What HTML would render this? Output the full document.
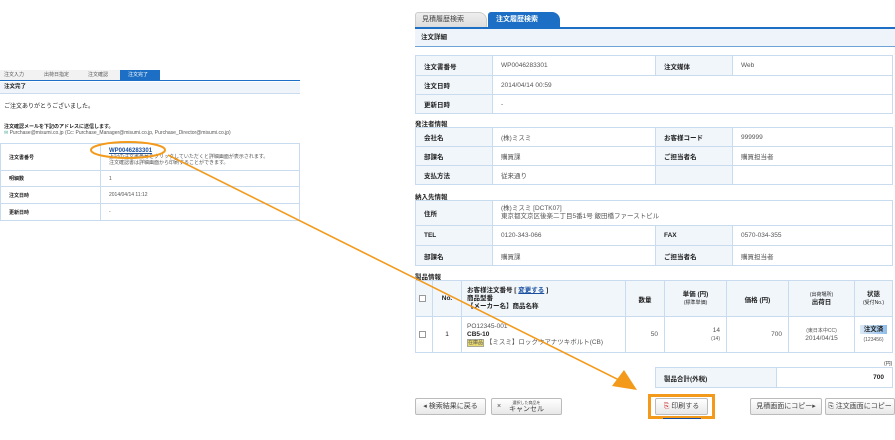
<!DOCTYPE html>
<html><head><meta charset="utf-8"><style>
*{margin:0;padding:0;box-sizing:border-box}
body{width:895px;height:440px;background:#fff;position:relative;overflow:hidden;font-family:"Liberation Sans","Noto Sans CJK JP",sans-serif;color:#333;font-size:7px}
.a{position:absolute;white-space:nowrap}
.b{font-weight:bold;color:#222}
table{position:absolute;border-collapse:collapse}
td{border:1px solid #c9dcef;padding:0 8px;font-size:6.5px;color:#555;white-space:nowrap}
td.l{background:#f1f6fb;font-weight:bold;color:#222;}
.btn{position:absolute;height:17px;border:1px solid #bbb;border-radius:2px;background:linear-gradient(#fff,#e8e8e8);font-size:7px;color:#444;text-align:center;line-height:15px}
</style></head><body>

<!-- LEFT PANEL -->
<div class="a" style="left:0;top:70px;width:160px;height:10px;background:#f2f2f2;font-size:5px;line-height:10px;color:#555">
<span style="position:absolute;left:4px">注文入力</span><span style="position:absolute;left:44px">出荷日指定</span><span style="position:absolute;left:88px">注文確認</span>
</div>
<div class="a" style="left:120px;top:70px;width:40px;height:10px;background:#1c6fc4;color:#fff;font-size:5px;line-height:10px;padding-left:8px">注文完了</div>
<div class="a" style="left:0;top:80px;width:300px;height:1px;background:#1c6fc4"></div>
<div class="a b" style="left:0;top:82px;width:300px;height:12px;background:#eef4fa;border-bottom:1px solid #c9dcef;font-size:5.5px;line-height:11px;padding-left:4px">注文完了</div>
<div class="a" style="left:4px;top:101px;font-size:6px;color:#222">ご注文ありがとうございました。</div>
<div class="a b" style="left:4px;top:123px;font-size:5px">注文確認メールを下記のアドレスに送信します。</div>
<div class="a" style="left:4px;top:130px;font-size:5px;color:#555"><span style="color:#4a9">✉</span> Purchase@misumi.co.jp (Cc: Purchase_Manager@misumi.co.jp, Purchase_Director@misumi.co.jp)</div>
<table style="left:0;top:143px;width:300px">
<tr style="height:27px"><td class="l" style="width:100px;font-size:5px;background:#fff">注文書番号</td><td style="font-size:5px;line-height:6px"><span style="color:#1a4fa0;text-decoration:underline;font-weight:bold;font-size:6px">WP0046283301</span><br>上記の注文書番号をクリックしていただくと詳細画面が表示されます。<br>注文確認書は詳細画面から印刷することができます。</td></tr>
<tr style="height:16px"><td class="l" style="font-size:5px;background:#fff">明細数</td><td style="font-size:5px">1</td></tr>
<tr style="height:17px"><td class="l" style="font-size:5px;background:#fff">注文日時</td><td style="font-size:5px">2014/04/14 11:12</td></tr>
<tr style="height:17px"><td class="l" style="font-size:5px;background:#fff">更新日時</td><td style="font-size:5px">-</td></tr>
</table>

<!-- RIGHT PANEL -->
<div class="a" style="left:415px;top:12px;width:72px;height:15px;background:linear-gradient(#eee,#ddd);border:1px solid #ccc;border-bottom:none;border-radius:3px 8px 0 0;font-size:7px;line-height:14px;padding-left:6px;color:#444">見積履歴検索</div>
<div class="a b" style="left:488px;top:12px;width:72px;height:15px;background:#1c6fc4;border-radius:3px 8px 0 0;font-size:7px;line-height:15px;padding-left:8px;color:#fff">注文履歴検索</div>
<div class="a" style="left:415px;top:27px;width:480px;height:2px;background:#1c6fc4"></div>
<div class="a b" style="left:415px;top:29px;width:480px;height:18px;background:#eef4fa;border-bottom:1px solid #6fa3d8;font-size:6.5px;line-height:18px;padding-left:6px">注文詳細</div>

<table style="left:415px;top:55px;width:478px">
<tr style="height:20px"><td class="l" style="width:77px">注文書番号</td><td style="width:163px">WP0046283301</td><td class="l" style="width:77px">注文媒体</td><td>Web</td></tr>
<tr style="height:19px"><td class="l">注文日時</td><td colspan="3">2014/04/14 00:59</td></tr>
<tr style="height:19px"><td class="l">更新日時</td><td colspan="3">-</td></tr>
</table>

<div class="a b" style="left:415px;top:118px;font-size:6.5px">発注者情報</div>
<table style="left:415px;top:127px;width:478px">
<tr style="height:19px"><td class="l" style="width:77px">会社名</td><td style="width:163px">(株)ミスミ</td><td class="l" style="width:77px">お客様コード</td><td>999999</td></tr>
<tr style="height:19px"><td class="l">部課名</td><td>購買課</td><td class="l">ご担当者名</td><td>購買担当者</td></tr>
<tr style="height:19px"><td class="l">支払方法</td><td>従来通り</td><td class="l"></td><td></td></tr>
</table>

<div class="a b" style="left:415px;top:191px;font-size:6.5px">納入先情報</div>
<table style="left:415px;top:200px;width:478px">
<tr style="height:25px"><td class="l" style="width:77px">住所</td><td colspan="3" style="line-height:8px">(株)ミスミ [DCTK07]<br>東京都文京区後楽二丁目5番1号 飯田橋ファーストビル</td></tr>
<tr style="height:20px"><td class="l">TEL</td><td style="width:163px">0120-343-066</td><td class="l" style="width:77px">FAX</td><td>0570-034-355</td></tr>
<tr style="height:20px"><td class="l">部課名</td><td>購買課</td><td class="l">ご担当者名</td><td>購買担当者</td></tr>
</table>

<div class="a b" style="left:415px;top:271px;font-size:6.5px">製品情報</div>
<table style="left:415px;top:280px;width:478px">
<tr style="height:36px;background:#f1f6fb">
<td class="l" style="width:17px;padding:0 3px"><div style="width:7px;height:7px;border:1px solid #999;background:#fff"></div></td>
<td class="l" style="width:29px;text-align:center;padding:0">No.</td>
<td class="l" style="width:164px;line-height:8px;padding-left:5px">お客様注文番号 [ <span style="color:#1a4fa0;text-decoration:underline">変更する</span> ]<br>商品型番<br>【メーカー名】商品名称</td>
<td class="l" style="width:39px;text-align:center;padding:0">数量</td>
<td class="l" style="width:62px;text-align:center;padding:0;line-height:8px">単価 (円)<br><span style="font-weight:normal;font-size:5px">(標準単価)</span></td>
<td class="l" style="width:62px;text-align:center;padding:0">価格 (円)</td>
<td class="l" style="width:66px;text-align:center;padding:0;line-height:8px"><span style="font-weight:normal;font-size:5px">(出荷場所)</span><br>出荷日</td>
<td class="l" style="text-align:center;padding:0;line-height:8px">状態<br><span style="font-weight:normal;font-size:5px">(受付No.)</span></td>
</tr>
<tr style="height:36px">
<td style="padding:0 3px"><div style="width:7px;height:7px;border:1px solid #999"></div></td>
<td style="text-align:center;padding:0;color:#222">1</td>
<td style="line-height:8px;padding-left:5px">PO12345-001<br><b style="color:#222">CB5-10</b><br><span style="background:#e8d870;border:1px solid #aa9;font-size:5px">在庫品</span> 【ミスミ】ロックウアナツキボルト(CB)</td>
<td style="text-align:right;padding-right:6px">50</td>
<td style="text-align:right;padding-right:6px;line-height:8px">14<br><span style="font-size:5px">(14)</span></td>
<td style="text-align:right;padding-right:6px">700</td>
<td style="text-align:center;padding:0;line-height:8px"><span style="font-size:5px">(東日本中CC)</span><br>2014/04/15</td>
<td style="text-align:center;padding:0;line-height:10px"><span style="background:linear-gradient(90deg,#dbe9f7,#8fbde8);padding:1px 4px;font-weight:bold;color:#222">注文済</span><br><span style="font-size:5px">(123456)</span></td>
</tr>
</table>

<div class="a" style="left:884px;top:360px;font-size:5px">(円)</div>
<table style="left:655px;top:367px;width:238px">
<tr style="height:20px"><td class="l" style="width:121px">製品合計(外税)</td><td style="text-align:right;font-weight:bold;color:#222">700</td></tr>
</table>

<div class="btn" style="left:415px;top:398px;width:71px">◂ 検索結果に戻る</div>
<div class="btn" style="left:491px;top:398px;width:71px;line-height:7px;font-size:7px"><span style="position:absolute;left:5px;top:4px">×</span><span style="font-size:4px">選択した商品を</span><br>キャンセル</div>
<div class="a" style="left:648px;top:394px;width:67px;height:25px;border:3px solid #f39a1b"></div>
<div class="btn" style="left:655px;top:398px;width:53px"><span style="color:#c33">⎘</span> 印刷する</div>
<div class="a" style="left:663px;top:416px;width:38px;height:3px;border-bottom:1px solid #1a4fa0"></div>
<div class="btn" style="left:750px;top:398px;width:72px">見積画面にコピー▸</div>
<div class="btn" style="left:825px;top:398px;width:70px">⎘ 注文画面にコピー</div>

<!-- Annotation -->
<svg class="a" style="left:0;top:0" width="895" height="440">
<ellipse cx="128" cy="150" rx="37" ry="8" fill="none" stroke="#f39a1b" stroke-width="2"/>
<line x1="168" y1="155" x2="625" y2="383" stroke="#f39a1b" stroke-width="1.6"/>
<polygon points="637,390 612,386 624,370" fill="#f39a1b"/>
</svg>
</body></html>
